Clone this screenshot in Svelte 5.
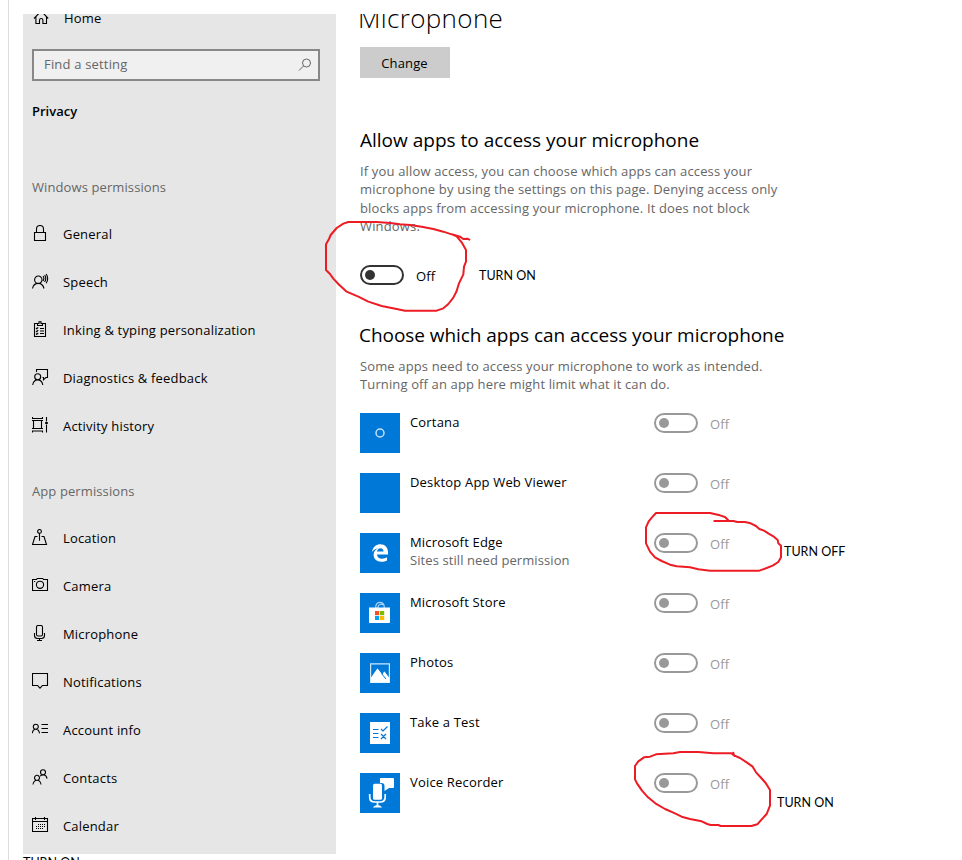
<script>
  const windowsItems = [
    { name: 'General', icon: 'lock' },
    { name: 'Speech', icon: 'speech' },
    { name: 'Inking & typing personalization', icon: 'clipboard' },
    { name: 'Diagnostics & feedback', icon: 'feedback' },
    { name: 'Activity history', icon: 'activity' }
  ];
  const appItems = [
    { name: 'Location', icon: 'location' },
    { name: 'Camera', icon: 'camera' },
    { name: 'Microphone', icon: 'mic' },
    { name: 'Notifications', icon: 'notify' },
    { name: 'Account info', icon: 'account' },
    { name: 'Contacts', icon: 'contacts' },
    { name: 'Calendar', icon: 'calendar' }
  ];
  const paths = {
    home: 'M2 9.5L9.2 2l7 7.5M3.9 8v6.5h3.6v-3.2q0-1.8 1.7-1.8t1.7 1.8v3.2h3.6V8',
    lock: 'M2.5 7.5h11v8h-11zM4.5 7.5V4a3.5 3.5 0 0 1 7 0v3.5',
    speech: 'M6.3 3a3.7 3.7 0 1 1 0 7.4a3.7 3.7 0 1 1 0-7.4M.5 15.5C1.2 12.2 3.4 10.4 6.3 10.4S11.2 12.2 12 15.5M11 3.2q1.8 2.2 0 4.6M12.6 2q2.4 3.3 0 7M14.2 1q3 4.5 0 9.2',
    clipboard: 'M5 2.5H2.5v13h11v-13H11M5.5 4.5v-2H7V.8h2v1.7h1.5v2zM8 7.5h4M8 10h4M8 12.5h4M4 7l.8.8L6.2 6.3M4 9.8l.8.8 1.4-1.5M4 12.6l.8.8 1.4-1.5',
    feedback: 'M5.7 4.8a3 3 0 1 1 0 6a3 3 0 1 1 0-6M.7 16C1.2 12.8 3 10.9 5.7 10.9S10.2 12.8 10.8 16M4.5 3V.5h11v8h-1.6l-2.4 2.3V8.5h-1',
    activity: 'M.5 0v1.500h10V0M.5 15.500v-1.500h10v1.500M0 3.500h11M0 11.500h11M1.500 3.500v8M9.500 3.500v8M14.500 0v4M14.500 8v7.500M13.200 5.500h2.600M13.200 6.500h2.600M14.500 4.500v3',
    location: 'M7.5.5a1.9 1.9 0 1 1 0 3.8a1.9 1.9 0 1 1 0-3.8M7.5 4.3v7.4M5.5 7.5H3L.5 15.5h14L12 7.5H9.5',
    camera: 'M.5 2.5h4L5.2 1.5h5.6l.7 1h4v11H.5zM8 4.2a3.6 3.6 0 1 1 0 7.2a3.6 3.6 0 1 1 0-7.2M2 4.5h1.2',
    mic: 'M6 .5h3q1.5 0 1.5 1.5v7.5Q10.500 11 9 11H6q-1.500 0-1.500-1.500V2Q4.500.5 6 .5M2.500 8v2.500q0 3 3 3h4q3 0 3-3V8M7.500 13.500v2M5 15.500h5',
    notify: 'M.5.5h15v12h-5L8 15.200 5.500 12.500h-5z',
    account: 'M3.800 3.200a2.500 2.500 0 1 1 0 5a2.500 2.500 0 1 1 0-5M.3 12.300C.6 9.700 1.900 8.300 3.800 8.300S7.100 9.700 7.500 12.300M9.500 3.500H16M9.500 7.500H16M9.500 11.500H16',
    contacts: 'M5 6.300a2.500 2.500 0 1 1 0 5a2.500 2.500 0 1 1 0-5M1 15.500c.4-2.800 1.900-4.200 4-4.200s3.600 1.400 4 4.200M11 .8a2.500 2.500 0 1 1 0 5a2.500 2.500 0 1 1 0-5M8 7.200c2.400-2.300 6.500-1.700 7 2.400',
    calendar: 'M.5 1.500h15v13H.5zM.5 4.500h15M3.500 0v3M12.500 0v3'
  };
  const apps = [
    { name: 'Cortana', icon: 'cortana' },
    { name: 'Desktop App Web Viewer', icon: '' },
    { name: 'Microsoft Edge', icon: 'edge', note: 'Sites still need permission' },
    { name: 'Microsoft Store', icon: 'store' },
    { name: 'Photos', icon: 'photos' },
    { name: 'Take a Test', icon: 'test' },
    { name: 'Voice Recorder', icon: 'voice' }
  ];
</script>

{#snippet glyph(name)}
  <svg class="glyph" width="17" height="17" viewBox="0 0 17 17">
    <path d={paths[name]} />
    {#if name === 'calendar'}
      <path class="dots" d="M6 7.500h8M4 9.500h10M4 11.500h8" />
    {/if}
  </svg>
{/snippet}

{#snippet navRow(item)}
  <li>{@render glyph(item.icon)}<span>{item.name}</span></li>
{/snippet}

{#snippet tile(name)}
  <svg class="tile" width="40" height="40" viewBox="0 0 40 40">
    {#if name === 'cortana'}
      <circle cx="20" cy="20" r="4" fill="none" stroke="#c4e2fa" stroke-width="1.500" />
    {:else if name === 'edge'}
      <path fill="#fff" fill-rule="evenodd" d="M12 19C13 13.500 16.500 11.300 20.300 11.300C25 11.300 28 14.800 28 19V21.500H17C17.200 24.500 19.500 25.700 22 25.700C24 25.700 25.800 25 27 24.300V27.500C25.500 28.400 23.500 28.800 21.300 28.800C16.500 28.800 13.600 25.800 13.600 21.800C13.600 18.800 15.200 16.600 18 15.500C16 15.600 13.500 17 12 19ZM17 18.600h6.500c0-2-1-3.300-3-3.300s-3.200 1.400-3.500 3.300z" />
    {:else if name === 'store'}
      <path d="M15.800 15v-1.500a4.200 4.200 0 0 1 8.400 0V15M18 15v-1a3 3 0 0 1 5-2" fill="none" stroke="#a9d4f8" stroke-width="1.200" />
      <path d="M9 14.500h21V29q0 1-1 1H10q-1 0-1-1z" fill="#fff" />
      <path d="M15 18h4.200v4.200H15z" fill="#f25022" /><path d="M20 18h4.200v4.200H20z" fill="#7fba00" />
      <path d="M15 23h4.200v4H15z" fill="#00a4ef" /><path d="M20 23h4.200v4H20z" fill="#ffb900" />
    {:else if name === 'photos'}
      <path d="M10.600 10.800h18.800v18.600H10.600z" fill="none" stroke="#cfe7fb" stroke-width="1.200" />
      <path d="M11 24.500l6-8.500q.5-.8 1 0l4.500 5.700 1.200-2.700q.6-.8 1.200 0l4.500 6v4.500H11z" fill="#fff" />
      <path d="M21.500 20.500l4.500 5.500" stroke="#0078d7" fill="none" />
    {:else if name === 'test'}
      <path d="M10 9h20v22H10z" fill="#fff" />
      <path d="M13 16.500h5.500M13 20.500h5.500M13 24.500h5.500M21 16l2 2 4.500-4.500M21 21l5 5M26 21l-5 5" fill="none" stroke="#0078d7" stroke-width="1.200" />
    {:else if name === 'voice'}
      <path d="M20 5h13q1 0 1 1v8q0 1-1 1h-4l-4.500 3V13q0-3-3-3H20z" fill="#fff" />
      <rect x="13" y="10.800" width="9" height="16" rx="1.500" fill="#fff" />
      <path d="M9.700 21v3q0 5 5 5h5.500q5 0 5-5v-3M17.500 29v4.500" fill="none" stroke="#fff" stroke-width="1.700" />
      <path d="M12.800 34.500q1.500-2.500 4.700-2.500t4.700 2.500z" fill="#fff" />
    {/if}
  </svg>
{/snippet}

<div class="page">
  <div class="rule"></div>
  <div class="window">
    <aside>
      <div class="home">{@render glyph('home')}<span>Home</span></div>
      <div class="search">
        <span>Find a setting</span>
        <svg width="14" height="14" viewBox="0 0 14 14"><circle cx="8.500" cy="5" r="4" /><path d="M5.500 8L1 12.500" /></svg>
      </div>
      <h3>Privacy</h3>
      <h4>Windows permissions</h4>
      <ul>{#each windowsItems as item}{@render navRow(item)}{/each}</ul>
      <h4 class="second">App permissions</h4>
      <ul>{#each appItems as item}{@render navRow(item)}{/each}</ul>
    </aside>
    <main>
      <h1>Microphone</h1>
      <button>Change</button>
      <h2>Allow apps to access your microphone</h2>
      <p>If you allow access, you can choose which apps can access your<br />microphone by using the settings on this page. Denying access only<br />blocks apps from accessing your microphone. It does not block<br />Windows.</p>
      <div class="switch master"><i></i><span>Off</span></div>
      <h2 class="choose">Choose which apps can access your microphone</h2>
      <p class="some">Some apps need to access your microphone to work as intended.<br />Turning off an app here might limit what it can do.</p>
      <div class="apps">
        {#each apps as app}
          <div class="app">
            {@render tile(app.icon)}
            <div class="info"><div>{app.name}</div>{#if app.note}<small>{app.note}</small>{/if}</div>
            <div class="switch"><i></i><span>Off</span></div>
          </div>
        {/each}
      </div>
    </main>
  </div>
  <svg class="ink" width="962" height="860" viewBox="0 0 962 860">
    <g transform="translate(310 155) scale(.33333)"><path d="M478 254L472 251L460 252L450 245L425 238L400 230L370 222L335 215L300 210L270 208L240 204L200 201H115L100 206L80 219L62 240L57 252L48 268V345L60 357L70 371L85 387L110 410L145 425L175 440L215 453L260 462L285 467H380L400 460L415 447L430 428L440 408L447 385L460 358L462 335L468 320V285L455 262L440 244L428 239" /></g>
    <g transform="translate(630 500) scale(.33333)"><path d="M253 63H310L322 66H345L362 70L378 78L388 87L402 92L416 101L430 109L443 120L445 130L453 137V172L445 186L428 197L410 204L388 212H240L205 208L180 202L140 199L120 194L95 183L75 172L60 155L48 130V82L56 64L66 52L78 39H240L270 46L285 51L294 60" /></g>
    <g transform="translate(620 740) scale(.33333)"><path d="M344 48L334 40H280L235 36H180L160 40L108 43L90 50L72 52L55 64L45 78V118L51 130L66 152L84 172L106 190L135 207L160 218L185 230L210 237L245 244L262 252L272 255H295L302 258H394L412 253L425 238L440 222L450 197V150L437 129L421 111L408 97L398 80L380 67L360 54L342 46L340 38" /></g>
  </svg>
  <span class="tag one">TURN ON</span>
  <span class="tag two">TURN OFF</span>
  <span class="tag three">TURN ON</span>
  <span class="tag four">TURN ON</span>
</div>

<style>
  :global(body) { margin: 0; background: #fff; }
  .page { position: relative; width: 962px; height: 860px; overflow: hidden; display: flex; background: #fff; color: #000; font: 13px/18.400px "Open Sans", "Noto Sans", sans-serif; letter-spacing: .18px; }
  .rule { width: 1px; margin-left: 8px; background: #ddd; }
  .window { display: flex; margin: 14px 0 6px 14px; width: 939px; height: 840px; overflow: hidden; }
  aside { width: 313px; background: #e6e6e6; flex: none; }
  h1, h2, h3, h4, p, ul { margin: 0; padding: 0; font-weight: 400; }
  .glyph { flex: none; display: block; fill: none; stroke: #000; stroke-width: 1.100; margin-bottom: 1px; }
  .dots { stroke-dasharray: 1 1; }
  .home { display: flex; margin: -5px 0 0 9px; height: 18px; }
  .home span { margin-left: 15px; }
  .search { box-sizing: border-box; display: flex; align-items: center; justify-content: space-between; width: 288px; height: 32px; margin: 22px 0 0 9px; padding: 0 6px 0 10px; border: 2px solid #888; background: #f0f0f0; color: #666; }
  .search span { padding-bottom: 2px; }
  .search svg { fill: none; stroke: #666; }
  h3 { font-size: 13px; font-weight: 600; line-height: 20px; letter-spacing: 0; margin: 20px 0 0 9px; }
  h4 { font-size: 13px; color: #666; line-height: 20px; letter-spacing: .1px; margin: 56px 0 13px 9px; }
  h4.second { margin: 31px 0 13px 9px; }
  li { list-style: none; display: flex; align-items: center; height: 48px; padding-left: 9px; }
  li span { margin-left: 14px; }
  main { padding-left: 24px; width: 520px; }
  h1 { font-size: 26px; font-weight: 300; line-height: 36px; letter-spacing: .35px; margin: -14px 0 0 -2px; }
  button { display: block; width: 90px; height: 31px; padding: 2px 1px 0 0; margin-top: 11px; border: 0; background: #ccc; color: #000; font: inherit; letter-spacing: .15px; }
  h2 { font-size: 19px; line-height: 28px; letter-spacing: 0; margin-top: 48px; }
  p { color: #666; margin-top: 8px; white-space: nowrap; letter-spacing: .16px; }
  .some { letter-spacing: .13px; }
  .switch { display: flex; align-items: center; height: 20px; color: #999; }
  .switch i { box-sizing: border-box; width: 44px; height: 20px; border: 2px solid #999; border-radius: 10px; display: flex; align-items: center; padding-left: 3px; }
  .switch i::before { content: ''; width: 10px; height: 10px; border-radius: 50%; background: #999; }
  .switch span { margin-left: 12px; padding-top: 2px; }
  .master { color: #000; margin-top: 29px; }
  .master span { padding-top: 3px; }
  .master i { border-color: #333; }
  .master i::before { background: #333; }
  .choose { margin: 36px 0 0 -1px; letter-spacing: -.05px; }
  .apps { margin-top: 20px; }
  .app { display: flex; height: 60px; }
  .tile { background: #0078d7; flex: none; }
  .info { width: 244px; margin-left: 10px; line-height: 18px; }
  small { display: block; font-size: 13px; line-height: 18px; letter-spacing: .09px; color: #666; }
  .ink { position: absolute; left: 0; top: 0; fill: none; stroke: #ed1c24; stroke-width: 6; stroke-linejoin: round; stroke-linecap: round; }
  .tag { position: absolute; font: 12.500px/16px Lato, sans-serif; letter-spacing: 0; white-space: nowrap; }
  .one { left: 479px; top: 268px; }
  .two { left: 784px; top: 544px; }
  .three { left: 777px; top: 795px; }
  .four { left: 23px; top: 855px; }
</style>
